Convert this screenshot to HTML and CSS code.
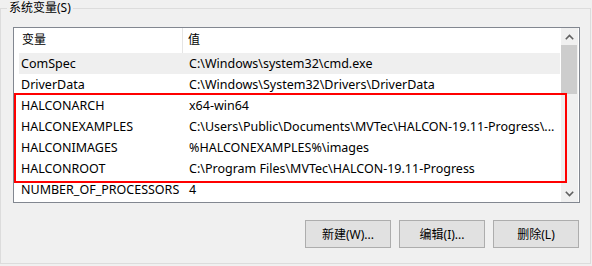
FILE: index.html
```html
<!DOCTYPE html>
<html lang="zh-CN">
<head>
<meta charset="utf-8">
<link rel="stylesheet" href="styles.css">
</head>
<body>
<div class="group">
  <div class="group-title">系统变量(S)</div>
  <div class="listbox">
    <div class="list">
      <div class="header">
        <div class="hcell hname">变量</div>
        <div class="hcell hval">值</div>
      </div>
      <div class="row hover"><div class="cname">ComSpec</div><div class="cval">C:\Windows\system32\cmd.exe</div></div>
      <div class="row"><div class="cname">DriverData</div><div class="cval">C:\Windows\System32\Drivers\DriverData</div></div>
      <div class="row"><div class="cname">HALCONARCH</div><div class="cval">x64-win64</div></div>
      <div class="row"><div class="cname">HALCONEXAMPLES</div><div class="cval">C:\Users\Public\Documents\MVTec\HALCON-19.11-Progress\...</div></div>
      <div class="row"><div class="cname">HALCONIMAGES</div><div class="cval">%HALCONEXAMPLES%\images</div></div>
      <div class="row"><div class="cname">HALCONROOT</div><div class="cval">C:\Program Files\MVTec\HALCON-19.11-Progress</div></div>
      <div class="row"><div class="cname">NUMBER_OF_PROCESSORS</div><div class="cval">4</div></div>
    </div>
    <div class="scrollbar">
      <div class="sb-btn">
        <svg width="9" height="6" viewBox="0 0 9 6"><polyline points="0.8,5.2 4.5,1.5 8.2,5.2" fill="none" stroke="#606060" stroke-width="1.6"/></svg>
      </div>
      <div class="sb-track"><div class="sb-thumb"></div></div>
      <div class="sb-btn">
        <svg width="9" height="6" viewBox="0 0 9 6"><polyline points="0.8,0.8 4.5,4.5 8.2,0.8" fill="none" stroke="#606060" stroke-width="1.6"/></svg>
      </div>
    </div>
    <div class="highlight-box"></div>
  </div>
  <div class="buttons">
    <button class="btn">新建(W)...</button>
    <button class="btn">编辑(I)...</button>
    <button class="btn">删除(L)</button>
  </div>
</div>
</body>
</html>
```
FILE: styles.css
```css
html, body {
  margin: 0;
  padding: 0;
  background: #f0f0f0;
}
body {
  font-family: "Noto Sans", "Noto Sans CJK SC", sans-serif;
  font-size: 12.5px;
  color: #000;
  width: 592px;
  height: 266px;
  overflow: hidden;
}
.group {
  margin-top: 8px;
  width: 591px;
  height: 256px;
  box-sizing: border-box;
  border: 1px solid #dcdcdc;
  display: flex;
  flex-direction: column;
}
.group-title {
  align-self: flex-start;
  margin: -9px 0 0 6px;
  padding: 0 2px;
  height: 16px;
  line-height: 16px;
  background: #f0f0f0;
  font-size: 12px;
}
.listbox {
  position: relative;
  margin: 11px 0 0 12px;
  width: 567px;
  height: 176px;
  box-sizing: border-box;
  border: 1px solid #828790;
  background: #fff;
  display: flex;
  overflow: hidden;
}
.list {
  flex: 1;
  overflow: hidden;
}
.header {
  display: flex;
  height: 25px;
}
.hcell {
  line-height: 24px;
  font-size: 12px;
}
.hname {
  width: 160px;
  padding-left: 8px;
  border-right: 1px solid #e5e5e5;
}
.hval {
  padding-left: 5px;
}
.row {
  display: grid;
  grid-template-columns: 163px 1fr;
  height: 21px;
  line-height: 21px;
  margin: 0 1px 0 5px;
  white-space: nowrap;
}
.row.hover {
  background: #efefef;
}
.cname {
  padding-left: 2px;
  overflow: hidden;
}
.cval {
  padding-left: 7px;
  overflow: hidden;
}
.scrollbar {
  width: 17px;
  margin-right: 1px;
  background: #f0f0f0;
  display: flex;
  flex-direction: column;
}
.sb-btn {
  height: 17px;
  display: flex;
  align-items: center;
  justify-content: center;
}
.sb-track {
  flex: 1;
}
.sb-thumb {
  height: 49px;
  margin: 0 1px 0 0;
  background: #cdcdcd;
}
.highlight-box {
  position: absolute;
  left: 0;
  top: 65px;
  width: 553px;
  height: 90px;
  box-sizing: border-box;
  border: 2px solid #ff0000;
}
.buttons {
  display: flex;
  justify-content: flex-end;
  gap: 8px;
  margin: 17px 11px 0 0;
}
.btn {
  width: 86px;
  height: 28px;
  box-sizing: border-box;
  background: #e1e1e1;
  border: 1px solid #adadad;
  border-radius: 0;
  font-family: "Noto Sans", "Noto Sans CJK SC", sans-serif;
  font-size: 12px;
  color: #000;
  padding: 0;
}
```
